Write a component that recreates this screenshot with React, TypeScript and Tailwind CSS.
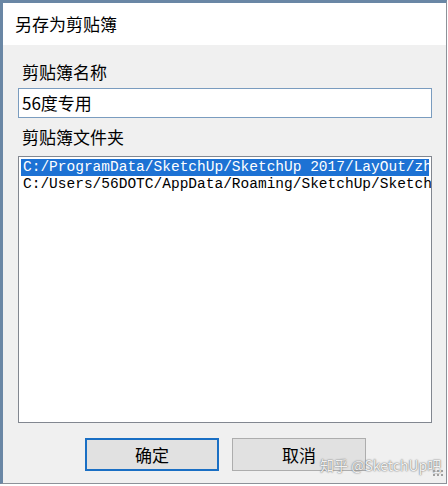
import React from 'react';

// only the part of each path that fits in the list is shown in the dialog
const folders = [
  'C:/ProgramData/SketchUp/SketchUp 2017/LayOut/zh',
  'C:/Users/56DOTC/AppData/Roaming/SketchUp/Sketch',
];

const cjk = { fontFamily: '"Microsoft YaHei", "Noto Sans CJK SC", "Noto Sans", sans-serif' };
const mono = { fontFamily: '"Liberation Mono", "Noto Sans CJK SC", monospace' };

export default function App() {
  return (
    <div className="w-[448px] h-[486px] overflow-hidden bg-white relative" style={cjk}>
      <div className="w-[447px] h-[484px] flex flex-col border-l-[3px] border-t-[3px] border-[#6a87a5] border-r border-b border-r-[#8d9299] border-b-[#8d9299]">
        {/* title bar */}
        <div className="h-[42px] bg-white flex items-center pl-[12px] text-[17px] text-black">
          另存为剪贴簿
        </div>

        {/* body */}
        <div className="flex-1 bg-[#f0f0f0] flex flex-col pl-[15px] pr-[12px]">
          <div className="mt-[15px] h-[24px] leading-[24px] text-[17px] pl-[4px] text-black">剪贴簿名称</div>
          <div className="mt-[4px] w-[414px] h-[30px] border border-[#7a9cbf] bg-white flex items-center pl-[3px] text-[17px] text-black">
            56度专用
          </div>

          <div className="mt-[7px] h-[24px] leading-[24px] text-[17px] pl-[4px] text-black">剪贴簿文件夹</div>
          <div className="mt-[7px] w-[414px] h-[267px] border border-[#828790] bg-white p-[2px] overflow-hidden">
            {folders.map((f, i) => (
              <div
                key={f}
                className={`h-[17px] leading-[17px] text-[14.5px] whitespace-nowrap pl-[2px] ${i === 0 ? 'bg-[#1d72d4] text-white' : 'text-black'}`}
                style={mono}
              >
                {f}
              </div>
            ))}
          </div>

          <div className="mt-[15px] flex gap-[13px] pl-[67px]">
            <button className="w-[134px] h-[33px] bg-[#e1e1e1] border-2 border-[#1a6fc4] text-[17px] text-black">确定</button>
            <button className="w-[134px] h-[33px] bg-[#e1e1e1] border border-[#adadad] text-[17px] text-black">取消</button>
          </div>
        </div>
      </div>

      {/* watermark */}
      <div
        className="absolute left-[320px] top-[455px] text-[14px] text-white/90 whitespace-nowrap"
        style={{ textShadow: '0 0 1px #666, 0 0 2px #888' }}
      >
        知乎 @SketchUp吧
      </div>
      <div className="absolute left-[433px] top-[470px] grid grid-cols-3 gap-[2px]">
        {Array.from({ length: 6 }).map((_, i) => (
          <div key={i} className="w-[2px] h-[2px] bg-[#a0a0a0]" />
        ))}
      </div>
    </div>
  );
}
